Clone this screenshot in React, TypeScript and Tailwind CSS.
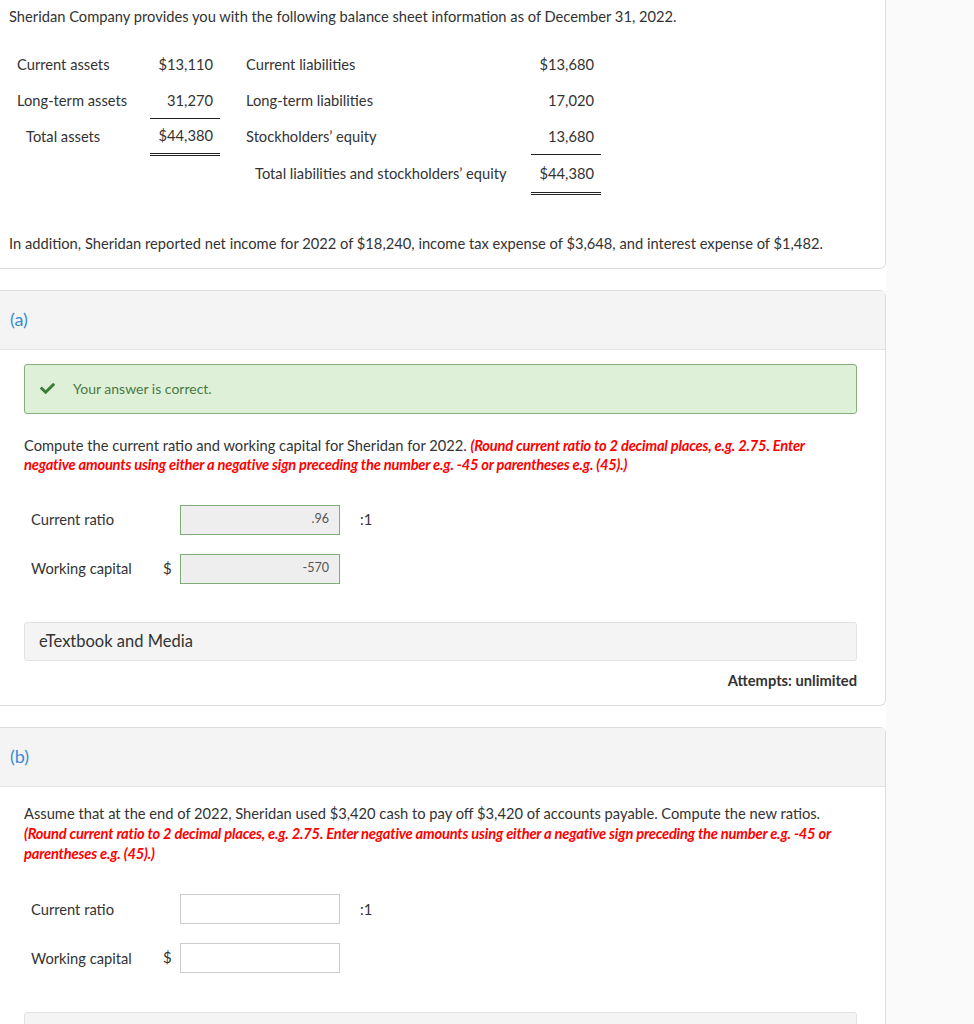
import { FaCheck } from 'react-icons/fa';

// Balance sheet row data
const rows = [
  { l1: 'Current assets', v1: '$13,110', l2: 'Current liabilities', v2: '$13,680' },
  { l1: 'Long-term assets', v1: '31,270', l2: 'Long-term liabilities', v2: '17,020', b1: 'single' },
  { l1: 'Total assets', v1: '$44,380', l2: 'Stockholders\u2019 equity', v2: '13,680', b1: 'double', b2: 'single', indent: true },
];

function PartHeader({ label }: { label: string }) {
  return (
    <div className="h-[59px] bg-[#f4f4f4] border-b border-[#e4e4e4] flex items-center px-[10px]">
      <span className="text-[18px] text-[#3b8ad4]">{label}</span>
    </div>
  );
}

function Hint({ children }: { children: React.ReactNode }) {
  return <span className="text-[#f00] font-bold italic tracking-[-0.2px]">{children}</span>;
}

function AnswerRow({
  label,
  value,
  prefix,
  suffix,
  filled,
}: {
  label: string;
  value?: string;
  prefix?: string;
  suffix?: string;
  filled?: boolean;
}) {
  return (
    <div className="flex items-center h-[30px]">
      <span className="w-[139px] pl-[7px]">{label}</span>
      <span className="w-[17px] text-[15px]">{prefix}</span>
      <div
        className={
          filled
            ? 'w-[160px] h-[30px] bg-[#eeeeee] border border-[#7fab76] flex items-center justify-end pr-[10px] text-[12.5px] text-[#555]'
            : 'w-[160px] h-[30px] bg-white border border-[#cccccc]'
        }
      >
        {value}
      </div>
      {suffix && <span className="ml-[20px]">{suffix}</span>}
    </div>
  );
}

export default function App() {
  return (
    <div className="flex min-h-[1024px] bg-[#fafafa] text-[14.7px] text-[#333]" style={{ fontFamily: 'Lato, "Liberation Sans", sans-serif' }}>
      <div className="w-[886px] bg-white flex flex-col gap-[21px] pb-10">
        {/* Problem statement */}
        <div className="border-r border-b border-[#dddddd] rounded-br-md pb-[15px]">
          <p className="pt-[6px] pl-[9px] leading-5">
            Sheridan Company provides you with the following balance sheet information as of December 31, 2022.
          </p>
          <table className="mt-[20px] ml-[10px] border-collapse">
            <tbody>
              {rows.map((r) => (
                <tr key={r.l1} className="h-[36px]">
                  <td className={r.indent ? 'w-[140px] pl-[16px]' : 'w-[140px] pl-[7px]'}>{r.l1}</td>
                  <td
                    className={
                      'w-[70px] pr-[7px] text-right ' +
                      (r.b1 === 'single' ? 'border-b border-[#222]' : r.b1 === 'double' ? 'border-b-[3px] border-double border-[#222]' : '')
                    }
                  >
                    {r.v1}
                  </td>
                  <td className="w-[311px] pl-[26px]">{r.l2}</td>
                  <td
                    className={
                      'w-[70px] pr-[7px] text-right ' + (r.b2 === 'single' ? 'border-b border-[#222]' : '')
                    }
                  >
                    {r.v2}
                  </td>
                </tr>
              ))}
              <tr className="h-[39px]">
                <td />
                <td />
                <td className="pl-[35px]">Total liabilities and stockholders&rsquo; equity</td>
                <td className="pr-[7px] text-right border-b-[3px] border-double border-[#222]">$44,380</td>
              </tr>
            </tbody>
          </table>
          <p className="mt-[38px] pl-[9px] leading-5">
            In addition, Sheridan reported net income for 2022 of $18,240, income tax expense of $3,648, and interest expense of $1,482.
          </p>
        </div>

        {/* Part (a) */}
        <div className="border-t border-r border-b border-[#dddddd] rounded-r-md">
          <PartHeader label="(a)" />
          <div className="pl-6 pr-7 pt-[14px] pb-[14px]">
            <div className="h-[50px] bg-[#dff0d8] border border-[#86b07a] rounded-[3px] flex items-center pl-[15px]">
              <FaCheck className="text-[#3c7a37] w-[15px] h-[15px]" />
              <span className="ml-[18px] text-[14px] text-[#4a7a44]">Your answer is correct.</span>
            </div>
            <p className="mt-[22px] leading-[19px]">
              Compute the current ratio and working capital for Sheridan for 2022.{' '}
              <Hint>
                (Round current ratio to 2 decimal places, e.g. 2.75. Enter negative amounts using either a negative sign preceding the number e.g. -45 or parentheses e.g. (45).)
              </Hint>
            </p>
            <div className="mt-[31px] flex flex-col gap-[19px]">
              <AnswerRow label="Current ratio" value=".96" suffix=":1" filled />
              <AnswerRow label="Working capital" prefix="$" value="-570" filled />
            </div>
            <div className="mt-[38px] h-[39px] bg-[#f4f4f4] border border-[#e2e2e2] rounded-[3px] flex items-center pl-[14px] text-[16.5px]">
              eTextbook and Media
            </div>
            <div className="mt-[8px] text-right font-bold">Attempts: unlimited</div>
          </div>
        </div>

        {/* Part (b) */}
        <div className="border-t border-r border-[#dddddd] rounded-tr-md">
          <PartHeader label="(b)" />
          <div className="pl-6 pr-7 pt-[16px]">
            <p className="leading-5">
              Assume that at the end of 2022, Sheridan used $3,420 cash to pay off $3,420 of accounts payable. Compute the new ratios.{' '}
              <Hint>
                (Round current ratio to 2 decimal places, e.g. 2.75. Enter negative amounts using either a negative sign preceding the number e.g. -45 or parentheses e.g. (45).)
              </Hint>
            </p>
            <div className="mt-[31px] flex flex-col gap-[19px]">
              <AnswerRow label="Current ratio" suffix=":1" />
              <AnswerRow label="Working capital" prefix="$" />
            </div>
            <div className="mt-[39px] h-[39px] bg-[#f4f4f4] border border-[#e2e2e2] rounded-[3px]" />
          </div>
        </div>
      </div>
      <div className="flex-1" />
    </div>
  );
}
